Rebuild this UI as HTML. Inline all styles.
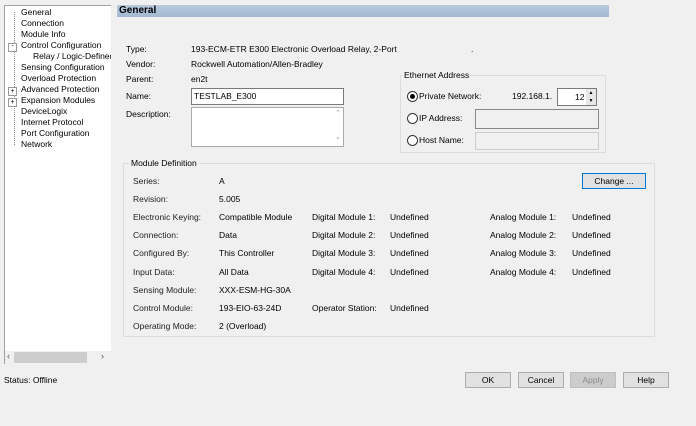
<html><head><style>
body{margin:0;width:696px;height:426px;background:#f0f0f0;font-family:"Liberation Sans",sans-serif;font-size:8.5px;color:#000;position:relative;overflow:hidden}
.a{position:absolute;white-space:nowrap}
.tree{position:absolute;left:4px;top:5px;width:106px;height:358px;background:#fff;border:1px solid #a0a0a0;border-right:none;border-bottom:none;overflow:hidden}
.tree div{position:absolute;left:16px;white-space:nowrap}
.box{position:absolute;background:#fff;border:1px solid #7a7a7a}
.grp{position:absolute;border:1px solid #dcdcdc}
.btn{position:absolute;height:14px;background:#e1e1e1;border:1px solid #adadad;text-align:center;line-height:14px}
.r{position:absolute;width:9px;height:9px;border:1px solid #333;border-radius:50%;background:#fff}
.g{color:#222}
</style></head><body>
<div class="tree">
<div style="top:1px">General</div>
<div style="top:12px">Connection</div>
<div style="top:23px">Module Info</div>
<div style="top:34px">Control Configuration</div>
<div style="top:45px;left:28px">Relay / Logic-Defined</div>
<div style="top:56px">Sensing Configuration</div>
<div style="top:67px">Overload Protection</div>
<div style="top:78px">Advanced Protection</div>
<div style="top:89px">Expansion Modules</div>
<div style="top:100px">DeviceLogix</div>
<div style="top:111px">Internet Protocol</div>
<div style="top:122px">Port Configuration</div>
<div style="top:133px">Network</div>
<span style="position:absolute;left:9px;top:6px;width:1px;height:133px;border-left:1px dotted #888"></span>
<span style="position:absolute;left:3px;top:37px;width:7px;height:7px;border:1px solid #999;background:#fff;font-size:7px;line-height:6px;text-align:center">-</span>
<span style="position:absolute;left:3px;top:81px;width:7px;height:7px;border:1px solid #999;background:#fff;font-size:7px;line-height:7px;text-align:center">+</span>
<span style="position:absolute;left:3px;top:92px;width:7px;height:7px;border:1px solid #999;background:#fff;font-size:7px;line-height:7px;text-align:center">+</span>
<span style="position:absolute;left:0;top:345px;width:106px;height:14px;background:#f0f0f0"></span>
<span style="position:absolute;left:9px;top:346px;width:73px;height:11px;background:#cdcdcd"></span>
<span style="position:absolute;left:2px;top:345px;font-size:9px;color:#555">&lsaquo;</span>
<span style="position:absolute;left:96px;top:345px;font-size:9px;color:#555">&rsaquo;</span>
</div>
<div class="a" style="left:117px;top:5px;width:490px;height:12px;background:linear-gradient(#b8cade,#a3b9d2);font-weight:bold;font-size:10px;line-height:12px;padding-left:2px">General</div>

<div class="a" style="left:126px;top:44px">Type:</div><div class="a" style="left:191px;top:44px">193-ECM-ETR E300 Electronic Overload Relay, 2-Port</div><div class="a" style="left:471px;top:44px">.</div>
<div class="a" style="left:126px;top:59px">Vendor:</div><div class="a" style="left:191px;top:59px">Rockwell Automation/Allen-Bradley</div>
<div class="a" style="left:126px;top:74px">Parent:</div><div class="a" style="left:191px;top:74px">en2t</div>
<div class="a" style="left:126px;top:91px">Name:</div>
<div class="box" style="left:191px;top:88px;width:151px;height:15px"><span class="a" style="left:2px;top:2px">TESTLAB_E300</span></div>
<div class="a" style="left:126px;top:109px">Description:</div>
<div class="box" style="left:191px;top:107px;width:151px;height:38px;border-color:#aaa"><span class="a" style="right:2px;top:1px;color:#999;font-size:7px">&#8963;</span><span class="a" style="right:2px;top:25px;color:#999;font-size:7px">&#8964;</span></div>

<div class="grp" style="left:400px;top:75px;width:204px;height:76px"></div>
<div class="a" style="left:403px;top:70px;background:#f0f0f0;padding:0 1px">Ethernet Address</div>
<div class="r" style="left:407px;top:91px"><span style="position:absolute;left:2px;top:2px;width:5px;height:5px;border-radius:50%;background:#000"></span></div>
<div class="a" style="left:419px;top:91px">Private Network:</div>
<div class="a" style="left:512px;top:91px">192.168.1.</div>
<div class="box" style="left:557px;top:88px;width:38px;height:16px"><span class="a" style="left:17px;top:3px">12</span><span class="a" style="left:28px;top:0;width:10px;height:16px;background:#e8e8e8;font-size:5px;line-height:8px;text-align:center">&#9650;<br>&#9660;</span></div>
<div class="r" style="left:407px;top:113px"></div>
<div class="a" style="left:419px;top:113px">IP Address:</div>
<div class="box" style="left:475px;top:109px;width:122px;height:18px;background:#f0f0f0;border-color:#888"></div>
<div class="r" style="left:407px;top:135px"></div>
<div class="a" style="left:419px;top:135px">Host Name:</div>
<div class="box" style="left:475px;top:132px;width:122px;height:16px;background:#f0f0f0;border-color:#ccc"></div>

<div class="grp" style="left:123px;top:163px;width:530px;height:172px"></div>
<div class="a" style="left:129px;top:158px;background:#f0f0f0;padding:0 2px">Module Definition</div>
<div class="btn" style="left:582px;top:173px;width:62px;border-color:#0078d7;line-height:14px">Change ...</div>

<div class="a g" style="left:133px;top:176px">Series:</div><div class="a" style="left:219px;top:176px">A</div>
<div class="a g" style="left:133px;top:194px">Revision:</div><div class="a" style="left:219px;top:194px">5.005</div>
<div class="a g" style="left:133px;top:212px">Electronic Keying:</div><div class="a" style="left:219px;top:212px">Compatible Module</div><div class="a" style="left:312px;top:212px">Digital Module 1:</div><div class="a" style="left:390px;top:212px">Undefined</div><div class="a" style="left:490px;top:212px">Analog Module 1:</div><div class="a" style="left:572px;top:212px">Undefined</div>
<div class="a g" style="left:133px;top:230px">Connection:</div><div class="a" style="left:219px;top:230px">Data</div><div class="a" style="left:312px;top:230px">Digital Module 2:</div><div class="a" style="left:390px;top:230px">Undefined</div><div class="a" style="left:490px;top:230px">Analog Module 2:</div><div class="a" style="left:572px;top:230px">Undefined</div>
<div class="a g" style="left:133px;top:248px">Configured By:</div><div class="a" style="left:219px;top:248px">This Controller</div><div class="a" style="left:312px;top:248px">Digital Module 3:</div><div class="a" style="left:390px;top:248px">Undefined</div><div class="a" style="left:490px;top:248px">Analog Module 3:</div><div class="a" style="left:572px;top:248px">Undefined</div>
<div class="a g" style="left:133px;top:267px">Input Data:</div><div class="a" style="left:219px;top:267px">All Data</div><div class="a" style="left:312px;top:267px">Digital Module 4:</div><div class="a" style="left:390px;top:267px">Undefined</div><div class="a" style="left:490px;top:267px">Analog Module 4:</div><div class="a" style="left:572px;top:267px">Undefined</div>
<div class="a g" style="left:133px;top:285px">Sensing Module:</div><div class="a" style="left:219px;top:285px">XXX-ESM-HG-30A</div>
<div class="a g" style="left:133px;top:303px">Control Module:</div><div class="a" style="left:219px;top:303px">193-EIO-63-24D</div><div class="a" style="left:312px;top:303px">Operator Station:</div><div class="a" style="left:390px;top:303px">Undefined</div>
<div class="a g" style="left:133px;top:321px">Operating Mode:</div><div class="a" style="left:219px;top:321px">2 (Overload)</div>

<div class="a" style="left:4px;top:375px">Status: Offline</div>
<div class="btn" style="left:465px;top:372px;width:44px">OK</div>
<div class="btn" style="left:518px;top:372px;width:44px">Cancel</div>
<div class="btn" style="left:570px;top:372px;width:44px;background:#ccc;border-color:#bfbfbf;color:#8a8a8a">Apply</div>
<div class="btn" style="left:623px;top:372px;width:44px">Help</div>
</body></html>
